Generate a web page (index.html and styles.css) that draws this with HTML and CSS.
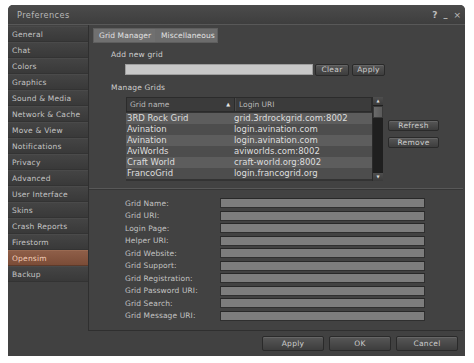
FILE: index.html
```html
<!DOCTYPE html>
<html>
<head>
<meta charset="utf-8">
<link rel="stylesheet" href="styles.css">
</head>
<body>
<div class="window">
  <div class="titlebar">
    <span class="title">Preferences</span>
    <span class="ctrl q">?</span>
    <span class="ctrl min">_</span>
    <span class="ctrl x">×</span>
  </div>
  <div class="body">
    <div class="sidebar">
      <div class="item">General</div>
      <div class="item">Chat</div>
      <div class="item">Colors</div>
      <div class="item">Graphics</div>
      <div class="item">Sound &amp; Media</div>
      <div class="item">Network &amp; Cache</div>
      <div class="item">Move &amp; View</div>
      <div class="item">Notifications</div>
      <div class="item">Privacy</div>
      <div class="item">Advanced</div>
      <div class="item">User Interface</div>
      <div class="item">Skins</div>
      <div class="item">Crash Reports</div>
      <div class="item">Firestorm</div>
      <div class="item active">Opensim</div>
      <div class="item">Backup</div>
    </div>
    <div class="main">
      <div class="panel">
        <div class="grids">
          <div class="tabs">
            <div class="tab active">Grid Manager</div>
            <div class="tab second">Miscellaneous</div>
          </div>
          <div class="label add-label">Add new grid</div>
          <div class="add-row">
            <div class="add-input"></div>
            <div class="btn small clear">Clear</div>
            <div class="btn small apply">Apply</div>
          </div>
          <div class="label manage-label">Manage Grids</div>
          <div class="manage-row">
            <div class="table">
              <div class="list">
                <div class="head">
                  <div class="hcol name">Grid name<span class="sort">▲</span></div>
                  <div class="hcol uri">Login URI</div>
                </div>
                <div class="row a"><div class="c name">3RD Rock Grid</div><div class="c uri">grid.3rdrockgrid.com:8002</div></div>
                <div class="row b"><div class="c name">Avination</div><div class="c uri">login.avination.com</div></div>
                <div class="row a"><div class="c name">Avination</div><div class="c uri">login.avination.com</div></div>
                <div class="row b"><div class="c name">AviWorlds</div><div class="c uri">aviworlds.com:8002</div></div>
                <div class="row a"><div class="c name">Craft World</div><div class="c uri">craft-world.org:8002</div></div>
                <div class="row b"><div class="c name">FrancoGrid</div><div class="c uri">login.francogrid.org</div></div>
              </div>
              <div class="scroll">
                <div class="arrow up">▲</div>
                <div class="thumb"></div>
                <div class="track"></div>
                <div class="arrow down">▼</div>
              </div>
            </div>
            <div class="side-btns">
              <div class="btn side">Refresh</div>
              <div class="btn side">Remove</div>
            </div>
          </div>
        </div>
        <div class="form">
          <div class="frow"><span class="flabel">Grid Name:</span><span class="field"></span></div>
          <div class="frow"><span class="flabel">Grid URI:</span><span class="field"></span></div>
          <div class="frow"><span class="flabel">Login Page:</span><span class="field"></span></div>
          <div class="frow"><span class="flabel">Helper URI:</span><span class="field"></span></div>
          <div class="frow"><span class="flabel">Grid Website:</span><span class="field"></span></div>
          <div class="frow"><span class="flabel">Grid Support:</span><span class="field"></span></div>
          <div class="frow"><span class="flabel">Grid Registration:</span><span class="field"></span></div>
          <div class="frow"><span class="flabel">Grid Password URI:</span><span class="field"></span></div>
          <div class="frow"><span class="flabel">Grid Search:</span><span class="field"></span></div>
          <div class="frow"><span class="flabel">Grid Message URI:</span><span class="field"></span></div>
        </div>
      </div>
      <div class="footer">
        <div class="btn big">Apply</div>
        <div class="btn big">OK</div>
        <div class="btn big">Cancel</div>
      </div>
    </div>
  </div>
</div>
</body>
</html>
```
FILE: styles.css
```css
* { box-sizing: border-box; }
body {
  margin: 0;
  background: #ffffff;
  font-family: "DejaVu Sans", "Noto Sans", sans-serif;
  font-size: 7.5px;
  color: #c8c8c8;
  white-space: nowrap;
}
.window {
  margin: 5px 0 0 8px;
  width: 457px;
  height: 351px;
  background: #414141;
  border-radius: 5px 5px 0 0;
  display: flex;
  flex-direction: column;
  overflow: hidden;
}
.titlebar {
  flex: none;
  height: 20px;
  display: flex;
  align-items: center;
  padding: 0 4px 0 9px;
  background: linear-gradient(#4b4b4b, #3e3e3e);
  border-bottom: 1px solid #585858;
}
.title {
  flex: 1;
  font-size: 8.2px;
  letter-spacing: 0.4px;
  color: #b8b8b8;
}
.ctrl { color: #bdbdbd; line-height: 10px; }
.q { font-weight: bold; font-size: 9px; margin-right: 6px; }
.min { font-weight: bold; font-size: 8px; margin-right: 6px; }
.x { font-size: 9px; }
.body {
  flex: 1;
  display: flex;
}
.sidebar {
  width: 80px;
  flex: none;
  padding-top: 1px;
}
.item {
  height: 16px;
  line-height: 15px;
  padding-left: 4px;
  background: linear-gradient(#444444, #393939);
  border-bottom: 1px solid #333333;
  border-top: 1px solid #4a4a4a;
  color: #c4c4c4;
  letter-spacing: 0.2px;
}
.item.active {
  background: linear-gradient(#8e5e48, #7b4c37);
  border-top-color: #9a6a52;
  border-bottom-color: #5c3a2a;
  color: #f2cdb8;
}
.main {
  flex: 1;
  display: flex;
  flex-direction: column;
}
.panel {
  height: 306px;
  margin-right: 2px;
  border-left: 1px solid #2f2f2f;
  border-bottom: 1px solid #2f2f2f;
  background: #424242;
  display: flex;
  flex-direction: column;
}
.grids {
  height: 164px;
  border-bottom: 1px solid #585858;
  box-shadow: 0 1px 0 #363636;
  padding-left: 4px;
  padding-top: 3px;
}
.tabs {
  display: flex;
  width: 125px;
  height: 15px;
  background: #6c6c6c;
  border: 1px solid #5e5e5e;
}
.tab {
  flex: none;
  width: 61px;
  line-height: 13px;
  color: #e2e2e2;
  padding-left: 5px;
  letter-spacing: 0.1px;
}
.tab.second { width: 62px; padding-left: 6px; }
.tab.active { background: #707070; }
.label { color: #cfcfcf; letter-spacing: 0.2px; height: 10px; line-height: 10px; }
.add-label { margin: 7px 0 0 18px; }
.add-row {
  display: flex;
  align-items: center;
  margin: 3px 0 0 32px;
  height: 13px;
}
.add-input {
  width: 188px;
  height: 11px;
  background: #c8c8c8;
  border: 1px solid #9e9e9e;
  margin-right: 2px;
}
.btn {
  display: flex;
  align-items: center;
  justify-content: center;
  background: linear-gradient(#575757, #3d3d3d);
  border: 1px solid #2a2a2a;
  border-radius: 2px;
  color: #cdcdcd;
  letter-spacing: 0.3px;
  box-shadow: inset 0 1px 0 #666666;
}
.btn.small { height: 12px; }
.clear { width: 34px; margin-right: 3px; }
.apply { width: 33px; }
.manage-label { margin: 7px 0 0 18px; }
.manage-row {
  display: flex;
  margin: 4px 0 0 33px;
}
.table {
  display: flex;
  height: 84px;
  background: #333333;
}
.list { width: 246px; }
.head {
  display: flex;
  height: 15px;
  background: #3b3b3b;
  border: 1px solid #2b2b2b;
  margin-bottom: 1px;
}
.hcol {
  line-height: 13px;
  color: #b9b9b9;
  padding-left: 3px;
  position: relative;
}
.hcol.name { width: 108px; border-right: 1px solid #2b2b2b; }
.hcol.uri { flex: 1; border-left: 1px solid #4a4a4a; }
.sort {
  position: absolute;
  right: 4px;
  top: 0;
  font-size: 5px;
  color: #e6e6e6;
}
.row {
  display: flex;
  height: 11px;
  font-size: 8.5px;
  line-height: 11px;
  color: #dedede;
}
.row.a { background: #5d5d5d; }
.row.b { background: #4d4d4d; }
.c.name { width: 108px; padding-left: 1px; }
.c.uri { flex: 1; padding-left: 0; }
.scroll {
  width: 11px;
  display: flex;
  flex-direction: column;
  background: #1f1f1f;
  border-left: 1px solid #2a2a2a;
}
.arrow {
  height: 8px;
  background: linear-gradient(#4e4e4e, #3b3b3b);
  color: #dcdcdc;
  font-size: 4px;
  line-height: 8px;
  text-align: center;
}
.thumb {
  height: 12px;
  margin: 1px 0;
  background: linear-gradient(90deg, #6a6a6a, #5a5a5a);
  border: 1px solid #3a3a3a;
}
.track { flex: 1; }
.side-btns {
  display: flex;
  flex-direction: column;
  gap: 6px;
  margin: 23px 0 0 5px;
}
.btn.side { width: 51px; height: 11px; }
.form {
  padding: 8px 0 0 36px;
  display: flex;
  flex-direction: column;
}
.frow {
  display: flex;
  align-items: center;
  height: 12.5px;
}
.flabel {
  width: 95px;
  color: #c2c2c2;
  letter-spacing: 0.1px;
}
.field {
  width: 205px;
  height: 10px;
  background: #7d7d7d;
  border: 1px solid #2f2f2f;
  border-top-color: #282828;
}
.footer {
  display: flex;
  justify-content: flex-end;
  gap: 5px;
  padding: 5px 7px 0 0;
}
.btn.big { width: 62px; height: 15px; }
```
